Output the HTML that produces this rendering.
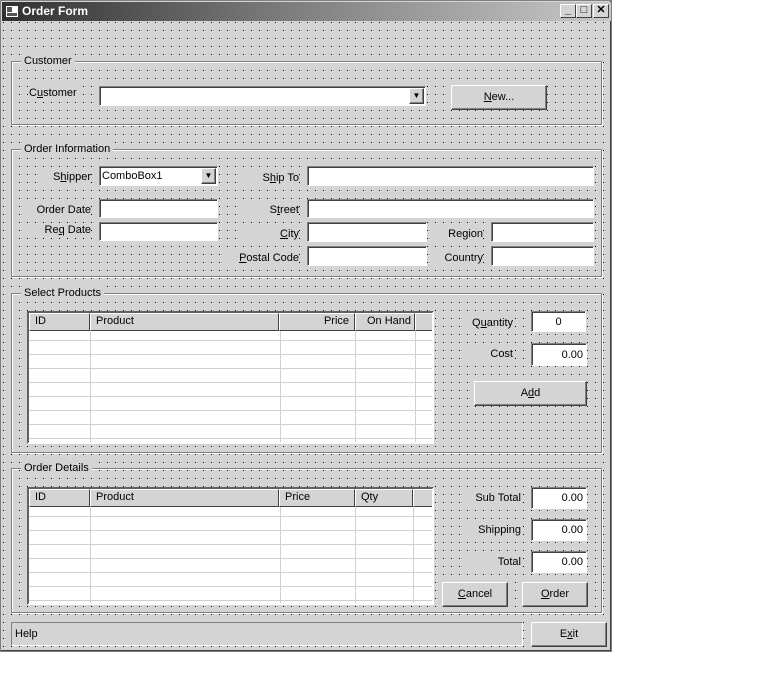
<!DOCTYPE html>
<html><head><meta charset="utf-8"><style>
*{box-sizing:border-box;margin:0;padding:0}
body{width:763px;height:694px;background:#fff;font-family:"Liberation Sans",sans-serif;font-size:11px;color:#000;position:relative;overflow:hidden}
.form{position:absolute;left:0;top:0;width:612px;height:652px;background-color:#d4d4d4;border:1px solid #808080;box-shadow:inset -1px -1px #404040}
.dots{position:absolute;left:1px;top:20px}
.title{position:absolute;left:1px;top:1px;width:609px;height:19px;background:linear-gradient(90deg,#303030,#7a7a7a 45%,#c8c8c8);color:#fff;font-weight:bold;font-size:12px;line-height:19px;padding-left:20px}
.ab{position:absolute}
.tb{position:absolute;background:#fff;border:1px solid;border-color:#808080 #fff #fff #808080;box-shadow:inset 1px 1px #404040}
.btn{position:absolute;background:#d4d4d4;border:1px solid;border-color:#fff #404040 #404040 #fff;box-shadow:inset -1px -1px #808080;text-align:center}
.grp{position:absolute;border:1px solid #808080;box-shadow:1px 1px #fff,inset 1px 1px #fff}
.gl{position:absolute;background:#d4d4d4;padding:0 3px;top:-8px;left:9px;line-height:14px}
.lb{position:absolute;background:#d4d4d4;line-height:14px;white-space:nowrap}
.r{text-align:right}
u{text-decoration:underline}
.grid{position:absolute;background-color:#fff;background-image:repeating-linear-gradient(180deg,transparent 0,transparent 13px,#d0d0d0 13px,#d0d0d0 14px);border:2px solid;border-color:#606060 #fff #fff #606060;overflow:hidden}
.hd{position:absolute;top:0;height:18px;background:#d4d4d4;border:1px solid;border-color:#fff #404040 #404040 #fff;line-height:15px;padding:0 5px;white-space:nowrap;overflow:hidden}
.vl{position:absolute;top:18px;bottom:0;width:1px;background:#d0d0d0}
.tbtn{position:absolute;top:3px;width:16px;height:14px;background:#d4d4d4;border:1px solid;border-color:#fff #404040 #404040 #fff;font-size:11px;line-height:11px;text-align:center;font-weight:bold}
.num{text-align:right;padding-right:3px;padding-top:3px;line-height:14px}
</style></head><body>
<div class="form">
<svg class="dots" width="609" height="630"><defs><pattern id="p" width="8" height="8" patternUnits="userSpaceOnUse"><rect x="1" y="1" width="1" height="1" fill="#000"/></pattern></defs><rect width="609" height="630" fill="url(#p)"/></svg>
<div class="title">Order Form</div>
<div class="ab" style="left:4px;top:4px;width:14px;height:13px;background:#fff;border:1px solid #333"><div class="ab" style="left:1px;top:1px;width:5px;height:5px;background:#555"></div><div class="ab" style="left:1px;top:7px;width:10px;height:3px;background:#555"></div></div>
<div class="tbtn" style="left:559px">_</div>
<div class="tbtn" style="left:575px">□</div>
<div class="tbtn" style="left:592px">✕</div>

<div class="grp" style="left:10px;top:60px;width:591px;height:64px"><div class="gl">Customer</div></div>
<div class="lb" style="left:28px;top:85px">C<u>u</u>stomer</div>
<div class="tb" style="left:98px;top:85px;width:327px;height:20px"><div class="btn" style="right:1px;top:1px;width:15px;height:16px;font-size:8px;line-height:14px">▼</div></div>
<div class="btn" style="left:450px;top:84px;width:96px;height:25px;line-height:22px"><u>N</u>ew...</div>

<div class="grp" style="left:10px;top:148px;width:591px;height:128px"><div class="gl">Order Information</div></div>
<div class="lb r" style="left:40px;top:169px;width:50px">S<u>h</u>ipper</div>
<div class="tb" style="left:98px;top:165px;width:119px;height:20px;padding:3px 2px;line-height:13px">ComboBox1<div class="btn" style="right:1px;top:1px;width:15px;height:16px;font-size:8px;line-height:14px">▼</div></div>
<div class="lb r" style="left:240px;top:170px;width:58px">S<u>h</u>ip To</div>
<div class="tb" style="left:306px;top:165px;width:287px;height:20px"></div>
<div class="lb r" style="left:20px;top:202px;width:70px">Order Date</div>
<div class="tb" style="left:98px;top:198px;width:119px;height:19px"></div>
<div class="lb r" style="left:20px;top:222px;width:70px">Re<u>q</u> Date</div>
<div class="tb" style="left:98px;top:221px;width:119px;height:19px"></div>
<div class="lb r" style="left:240px;top:202px;width:58px">S<u>t</u>reet</div>
<div class="tb" style="left:306px;top:198px;width:287px;height:19px"></div>
<div class="lb r" style="left:240px;top:226px;width:58px"><u>C</u>ity</div>
<div class="tb" style="left:306px;top:221px;width:120px;height:20px"></div>
<div class="lb r" style="left:430px;top:226px;width:52px">Region</div>
<div class="tb" style="left:490px;top:221px;width:103px;height:20px"></div>
<div class="lb r" style="left:220px;top:250px;width:78px"><u>P</u>ostal Code</div>
<div class="tb" style="left:306px;top:245px;width:120px;height:20px"></div>
<div class="lb r" style="left:430px;top:250px;width:52px">Country</div>
<div class="tb" style="left:490px;top:245px;width:103px;height:20px"></div>

<div class="grp" style="left:10px;top:292px;width:591px;height:160px"><div class="gl">Select Products</div></div>
<div class="grid" style="left:26px;top:310px;width:407px;height:133px">
<div class="hd" style="left:0;width:61px">ID</div>
<div class="hd" style="left:61px;width:189px">Product</div>
<div class="hd r" style="left:250px;width:76px">Price</div>
<div class="hd r" style="left:326px;width:60px;padding:0 3px">On Hand</div>
<div class="hd" style="left:386px;width:19px;border-right:0"></div>
<div class="vl" style="left:61px"></div><div class="vl" style="left:251px"></div><div class="vl" style="left:326px"></div><div class="vl" style="left:386px"></div>
</div>
<div class="lb r" style="left:460px;top:315px;width:52px">Q<u>u</u>antity</div>
<div class="tb" style="left:530px;top:310px;width:55px;height:21px;text-align:center;padding-top:3px;line-height:14px">0</div>
<div class="lb r" style="left:460px;top:346px;width:52px">Cost</div>
<div class="tb num" style="left:530px;top:342px;width:56px;height:23px;padding-top:4px">0.00</div>
<div class="btn" style="left:473px;top:380px;width:113px;height:25px;line-height:22px">A<u>d</u>d</div>

<div class="grp" style="left:10px;top:467px;width:591px;height:145px"><div class="gl">Order Details</div></div>
<div class="grid" style="left:26px;top:486px;width:407px;height:118px">
<div class="hd" style="left:0;width:61px">ID</div>
<div class="hd" style="left:61px;width:189px">Product</div>
<div class="hd" style="left:250px;width:76px">Price</div>
<div class="hd" style="left:326px;width:58px">Qty</div>
<div class="hd" style="left:384px;width:21px;border-right:0"></div>
<div class="vl" style="left:61px"></div><div class="vl" style="left:251px"></div><div class="vl" style="left:326px"></div><div class="vl" style="left:384px"></div>
</div>
<div class="lb r" style="left:460px;top:490px;width:60px">Sub Total</div>
<div class="tb num" style="left:530px;top:486px;width:56px;height:22px">0.00</div>
<div class="lb r" style="left:460px;top:522px;width:60px">Shipping</div>
<div class="tb num" style="left:530px;top:518px;width:56px;height:22px">0.00</div>
<div class="lb r" style="left:460px;top:554px;width:60px">Total</div>
<div class="tb num" style="left:530px;top:550px;width:56px;height:22px">0.00</div>
<div class="btn" style="left:441px;top:581px;width:66px;height:25px;line-height:22px"><u>C</u>ancel</div>
<div class="btn" style="left:521px;top:581px;width:66px;height:25px;line-height:22px"><u>O</u>rder</div>

<div class="ab" style="left:10px;top:621px;width:512px;height:24px;background:#d4d4d4;border:1px solid;border-color:#808080 #fff #fff #808080;padding:3px;line-height:16px">Help</div>
<div class="btn" style="left:530px;top:621px;width:76px;height:25px;line-height:22px">E<u>x</u>it</div>
</div>
</body></html>
